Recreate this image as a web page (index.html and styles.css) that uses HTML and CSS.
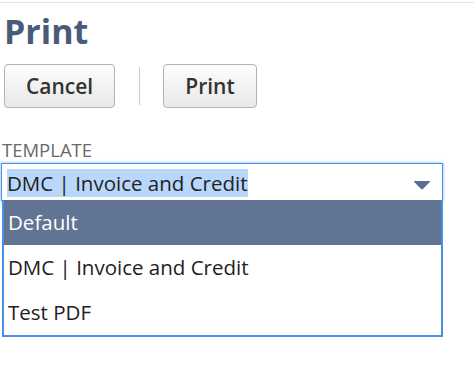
FILE: index.html
```html
<!DOCTYPE html>
<html lang="en">
<head>
<meta charset="utf-8">
<title>Print</title>
<link rel="stylesheet" href="styles.css">
</head>
<body>
<div class="topbar"></div>
<div class="header">
  <h1 class="title">Print</h1>
  <div class="actions">
    <button class="btn" type="button">Cancel</button>
    <span class="sep"></span>
    <button class="btn" type="button">Print</button>
  </div>
</div>
<div class="field">
  <div class="label">TEMPLATE</div>
  <div class="select">
    <span class="select-value">DMC | Invoice and Credit</span>
    <svg class="caret" width="18" height="10" viewBox="0 0 18 10" aria-hidden="true">
      <path d="M1.5 1 H16.5 Q17.6 1 16.8 1.9 L9.9 8.9 Q9 9.8 8.1 8.9 L1.2 1.9 Q0.4 1 1.5 1 Z" fill="#5b6e8e"/>
    </svg>
  </div>
  <ul class="listbox">
    <li class="option active">Default</li>
    <li class="option">DMC | Invoice and Credit</li>
    <li class="option">Test PDF</li>
  </ul>
</div>
</body>
</html>
```

FILE: styles.css
```css
html, body {
  margin: 0;
  padding: 0;
  background: #ffffff;
}

body {
  font-family: "Open Sans", "DejaVu Sans", sans-serif;
  color: #222222;
}

.topbar {
  height: 1px;
  margin-top: 2px;
  background: #e3e3e3;
}

.header {
  padding-left: 4px;
}

.title {
  margin: 4px 0 0;
  font-size: 34px;
  line-height: 49px;
  font-weight: 700;
  color: #4a5a79;
}

.actions {
  display: flex;
  align-items: center;
  margin-top: 8px;
}

.btn {
  box-sizing: border-box;
  height: 44px;
  padding: 0 21px;
  border: 1px solid #b3b3b3;
  border-radius: 4px;
  background: linear-gradient(#fdfdfd, #e8e8e8);
  font-family: "Open Sans", "DejaVu Sans", sans-serif;
  font-size: 21px;
  font-weight: 600;
  color: #333333;
}

.sep {
  width: 1px;
  height: 38px;
  background: #cccccc;
  margin: 0 23px 0 24px;
}

.field {
  padding-left: 1px;
  margin-top: 30px;
}

.label {
  font-size: 18.5px;
  line-height: 24px;
  color: #6a6a6a;
  margin-left: 1px;
}

.select {
  box-sizing: border-box;
  width: 442px;
  height: 38px;
  margin-top: 1px;
  display: flex;
  align-items: flex-start;
  padding: 5px 11px 0 5px;
  border: 1px solid #4a92ec;
  box-shadow: 0 0 3px rgba(74, 146, 236, 0.75);
  background: #ffffff;
}

.select-value {
  font-size: 20.5px;
  line-height: 28px;
  background: #b9d7fb;
  color: #222222;
}

.caret {
  margin-left: auto;
  align-self: center;
}

.listbox {
  list-style: none;
  margin: -1px 0 0 1px;
  padding: 0;
  width: 441px;
  box-sizing: border-box;
  border: 2px solid #4a90e8;
  border-top: 0;
  background: #ffffff;
}

.option {
  height: 45px;
  line-height: 45px;
  padding-left: 4px;
  font-size: 20.5px;
  color: #222222;
}

.option.active {
  background: #617493;
  color: #ffffff;
}
```
